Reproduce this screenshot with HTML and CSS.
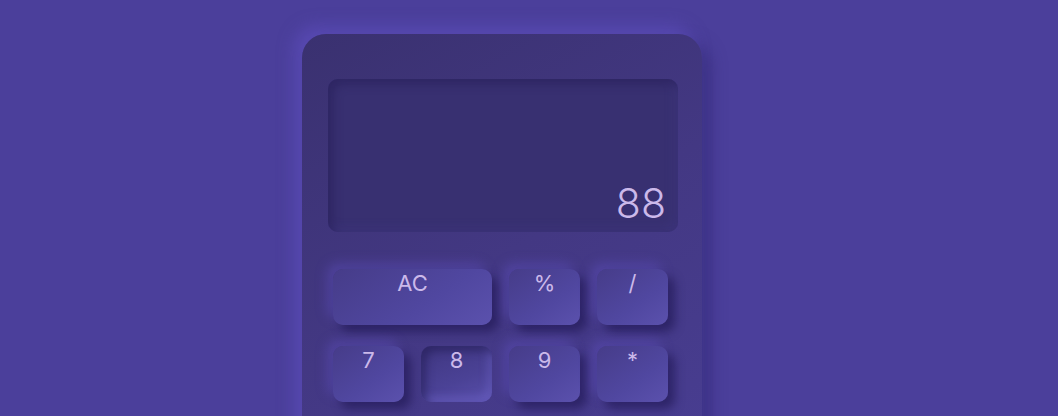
FILE: index.html
```html
<!DOCTYPE html>
<html>
<head>
<meta charset="utf-8">
<link rel="stylesheet" href="styles.css">
</head>
<body>
<div class="calc">
  <div class="screen"><span class="value">88</span></div>
  <div class="keys">
    <div class="key wide">AC</div>
    <div class="key">%</div>
    <div class="key">/</div>
    <div class="key">7</div>
    <div class="key pressed">8</div>
    <div class="key">9</div>
    <div class="key">*</div>
  </div>
</div>
</body>
</html>
```
FILE: styles.css
```css
html, body {
  margin: 0;
  padding: 0;
}
body {
  background: #4b3f9b;
  height: 416px;
  overflow: hidden;
  font-family: "Inter", "Open Sans", sans-serif;
}
.calc {
  width: 400px;
  margin: 34px 0 0 302px;
  height: 520px;
  box-sizing: border-box;
  padding: 45px 24px 0 26px;
  border-radius: 24px;
  background: linear-gradient(150deg, #3a3170 0%, #433883 45%, #4a3f96 100%);
  box-shadow: -8px -8px 16px rgba(98, 82, 196, 0.55), 8px 8px 16px rgba(45, 36, 110, 0.55);
}
.screen {
  height: 153px;
  width: 350px;
  border-radius: 10px;
  background: #383071;
  box-shadow: inset 5px 5px 10px rgba(40, 32, 90, 0.6), inset -4px -4px 10px rgba(70, 60, 140, 0.35);
  display: flex;
  align-items: flex-end;
  justify-content: flex-end;
  box-sizing: border-box;
  padding: 0 12px 8px 0;
}
.value {
  color: #cbb9ea;
  font-size: 41px;
  font-weight: 300;
  line-height: 1;
}
.keys {
  margin: 37px 0 0 5px;
  display: grid;
  grid-template-columns: repeat(4, 71px);
  grid-auto-rows: 56px;
  column-gap: 17px;
  row-gap: 21px;
}
.key {
  border-radius: 10px;
  background: linear-gradient(145deg, #463c89 0%, #5047a0 60%, #5b51ad 100%);
  box-shadow: 7px 7px 10px rgba(30, 22, 80, 0.6), -6px -6px 12px rgba(95, 80, 190, 0.45);
  color: #cbb9ea;
  font-size: 22px;
  font-weight: 400;
  text-align: center;
  line-height: 29px;
}
.key.wide {
  grid-column: span 2;
}
.key.pressed {
  background: linear-gradient(160deg, #3f3680 0%, #4b4296 60%, #5a50ad 100%);
  box-shadow: inset 5px 5px 8px rgba(35, 28, 85, 0.6), inset -4px -5px 8px rgba(110, 100, 200, 0.5);
}
```
